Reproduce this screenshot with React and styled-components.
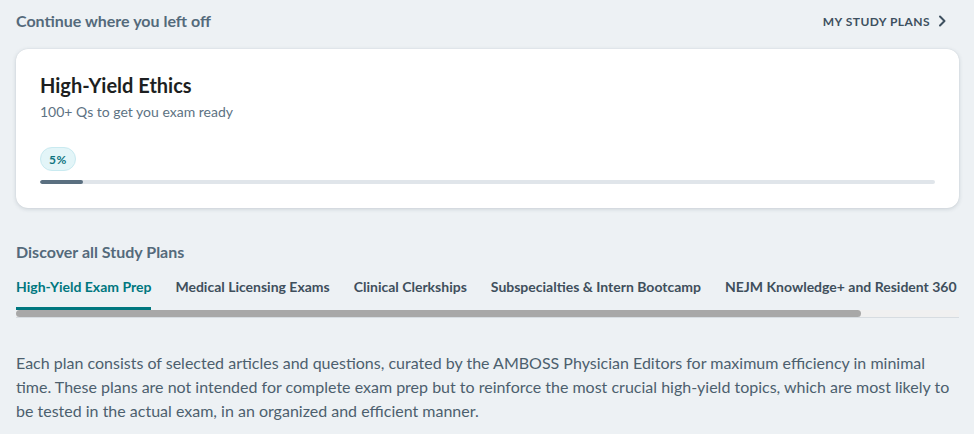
import React from 'react';
import styled, { createGlobalStyle } from 'styled-components';

const GlobalStyle = createGlobalStyle`
  body {
    margin: 0;
    background: #edf1f4;
    font-family: Lato, "Noto Sans", sans-serif;
  }
`;

const Page = styled.div`
  padding: 11px 15px 0 16px;
  min-height: 100vh;
  box-sizing: border-box;
`;

const HeaderRow = styled.div`
  display: flex;
  justify-content: space-between;
  align-items: center;
  height: 20px;
`;

const SectionTitle = styled.h2`
  margin: 0;
  font-size: 16px;
  line-height: 20px;
  font-weight: 700;
  color: #546a7b;
`;

const PlansLink = styled.a`
  display: flex;
  align-items: center;
  gap: 8px;
  padding-right: 13px;
  font-size: 12px;
  font-weight: 700;
  letter-spacing: 0.45px;
  text-transform: uppercase;
  color: #3e505f;
  cursor: pointer;
`;

const Card = styled.div`
  margin-top: 18px;
  background: #fff;
  border-radius: 12px;
  padding: 24px;
  box-shadow: 0 1px 4px rgba(40, 60, 80, 0.18), 0 0 1px rgba(40, 60, 80, 0.12);
`;

const CardTitle = styled.div`
  font-size: 20px;
  line-height: 24px;
  font-weight: 700;
  color: #1d1f21;
`;

const CardSub = styled.div`
  margin-top: 5px;
  font-size: 14px;
  line-height: 20px;
  color: #5d7283;
`;

const Badge = styled.span`
  display: inline-flex;
  align-items: center;
  justify-content: center;
  margin-top: 25px;
  height: 24px;
  padding: 0 8px;
  box-sizing: border-box;
  border-radius: 12px;
  background: #e3f5f8;
  border: 1px solid #c9eaf0;
  color: #0f7480;
  font-size: 12px;
  font-weight: 700;
  letter-spacing: 0.5px;
`;

const Track = styled.div`
  margin-top: 9px;
  height: 4px;
  border-radius: 2px;
  background: #e0e5ea;
  overflow: hidden;
`;

const Fill = styled.div`
  height: 100%;
  border-radius: 2px;
  background: #5a6f80;
`;

const SubHeading = styled(SectionTitle)`
  margin-top: 34px;
`;

const TabArea = styled.div`
  margin-top: 15px;
  border-bottom: 1px solid #d6dce1;
`;

const TabViewport = styled.div`
  overflow: hidden;
`;

const TabList = styled.div`
  display: flex;
  gap: 24px;
  width: max-content;
`;

const Tab = styled.button`
  border: none;
  background: none;
  padding: 0 0 10px;
  font-family: inherit;
  font-size: 14px;
  line-height: 20px;
  font-weight: 700;
  white-space: nowrap;
  cursor: pointer;
  color: ${(p) => (p.$active ? '#00777f' : '#3f4f5c')};
  border-bottom: 3px solid ${(p) => (p.$active ? '#00777f' : 'transparent')};
`;

const ScrollTrack = styled.div`
  height: 7px;
  background: #f0f0f0;
`;

const ScrollThumb = styled.div`
  height: 100%;
  border-radius: 4px;
  background: #a8a8a8;
`;

const Description = styled.p`
  margin: 33px 0 0;
  font-size: 16px;
  line-height: 24px;
  color: #4c5f6e;
  max-width: 944px;
`;

const tabs = [
  'High-Yield Exam Prep',
  'Medical Licensing Exams',
  'Clinical Clerkships',
  'Subspecialties & Intern Bootcamp',
  'NEJM Knowledge+ and Resident 360',
];

const Chevron = () => (
  <svg width="8" height="12" viewBox="0 0 8 12" fill="none">
    <path d="M2 1.5L6.5 6L2 10.5" stroke="#3e505f" strokeWidth="2" strokeLinecap="round" strokeLinejoin="round" />
  </svg>
);

const App = () => {
  const progress = 5;
  const thumbShare = 89.6;
  return (
    <Page>
      <GlobalStyle />
      <HeaderRow>
        <SectionTitle>Continue where you left off</SectionTitle>
        <PlansLink>
          My Study Plans
          <Chevron />
        </PlansLink>
      </HeaderRow>
      <Card>
        <CardTitle>High-Yield Ethics</CardTitle>
        <CardSub>100+ Qs to get you exam ready</CardSub>
        <Badge>{progress}%</Badge>
        <Track>
          <Fill style={{ width: `${progress * 0.96}%` }} />
        </Track>
      </Card>
      <SubHeading>Discover all Study Plans</SubHeading>
      <TabArea>
        <TabViewport>
          <TabList>
            {tabs.map((t, i) => (
              <Tab key={t} $active={i === 0}>
                {t}
              </Tab>
            ))}
          </TabList>
        </TabViewport>
        <ScrollTrack>
          <ScrollThumb style={{ width: `${thumbShare}%` }} />
        </ScrollTrack>
      </TabArea>
      <Description>
        Each plan consists of selected articles and questions, curated by the AMBOSS Physician Editors for maximum
        efficiency in minimal time. These plans are not intended for complete exam prep but to reinforce the most
        crucial high-yield topics, which are most likely to be tested in the actual exam, in an organized and
        efficient manner.
      </Description>
    </Page>
  );
};

export default App;
